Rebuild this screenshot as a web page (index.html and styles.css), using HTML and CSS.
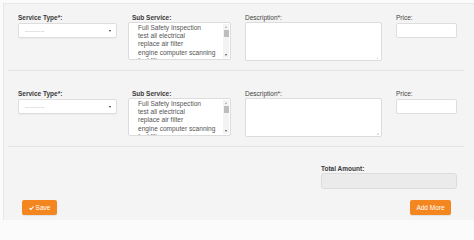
FILE: index.html
```html
<!DOCTYPE html>
<html>
<head>
<meta charset="utf-8">
<link rel="stylesheet" href="styles.css">
</head>
<body>
<div class="panel">
  <div class="item">
    <div class="field">
      <label class="lbl">Service Type*:</label>
      <div class="select"><span class="ph">---------</span><span class="caret"></span></div>
    </div>
    <div class="field">
      <label class="lbl lbl-sub">Sub Service:</label>
      <div class="listbox">
        <div class="options">
          <div>Full Safety Inspection</div>
          <div>test all electrical</div>
          <div>replace air filter</div>
          <div>engine computer scanning</div>
          <div>fuel filter</div>
        </div>
        <div class="sbar"><span class="up"></span><span class="thumb"></span><span class="down"></span></div>
      </div>
    </div>
    <div class="field">
      <label class="lbl lbl-light">Description*:</label>
      <textarea class="textarea"></textarea>
    </div>
    <div class="field">
      <label class="lbl lbl-light">Price:</label>
      <div class="input"></div>
    </div>
  </div>
  <div class="item">
    <div class="field">
      <label class="lbl">Service Type*:</label>
      <div class="select"><span class="ph">---------</span><span class="caret"></span></div>
    </div>
    <div class="field">
      <label class="lbl lbl-sub">Sub Service:</label>
      <div class="listbox">
        <div class="options">
          <div>Full Safety Inspection</div>
          <div>test all electrical</div>
          <div>replace air filter</div>
          <div>engine computer scanning</div>
          <div>fuel filter</div>
        </div>
        <div class="sbar"><span class="up"></span><span class="thumb"></span><span class="down"></span></div>
      </div>
    </div>
    <div class="field">
      <label class="lbl lbl-light">Description*:</label>
      <textarea class="textarea"></textarea>
    </div>
    <div class="field">
      <label class="lbl lbl-light">Price:</label>
      <div class="input"></div>
    </div>
  </div>
  <div class="total-row">
    <div class="total">
      <label class="lbl">Total Amount:</label>
      <div class="input input-disabled"></div>
    </div>
  </div>
  <div class="actions">
    <button class="btn btn-save"><svg class="check" viewBox="0 0 10 8" width="5" height="4"><path d="M1 4 L4 7 L9 1" fill="none" stroke="#fff" stroke-width="2.2"/></svg>Save</button>
    <button class="btn btn-add">Add More</button>
  </div>
</div>
</body>
</html>
```
FILE: styles.css
```css
html, body {
  margin: 0;
  padding: 0;
  background: #fbfbfb;
  font-family: "Liberation Sans", Arial, sans-serif;
}
.panel {
  margin: 3px 0 0 3px;
  height: 217px;
  box-sizing: border-box;
  border-top: 1px solid #e9e9e9;
  border-left: 1px solid #e6e6e6;
  background: #f4f4f4;
  padding-left: 4px;
}
.item {
  width: 456px;
  box-sizing: border-box;
  display: grid;
  grid-template-columns: 110px 117px 151px 61px;
  align-items: start;
  padding: 19px 0 9px 10px;
  border-bottom: 1px solid #e4e4e4;
}
.item:first-child {
  padding-top: 10px;
}
.field {
  display: flex;
  flex-direction: column;
}
.lbl {
  display: block;
  height: 8px;
  font-size: 6.5px;
  line-height: 8px;
  font-weight: bold;
  color: #3a3a3a;
  white-space: nowrap;
}
.lbl-light {
  font-weight: normal;
  color: #444;
}
.lbl-sub {
  padding-left: 4px;
}
.select {
  width: 99px;
  height: 15px;
  margin-top: 1px;
  box-sizing: border-box;
  background: #fff;
  border: 1px solid #dedede;
  border-radius: 2px;
  box-shadow: 0 1px 1px rgba(0,0,0,0.04);
  display: flex;
  align-items: center;
  justify-content: space-between;
  padding: 0 5px 0 6px;
}
.ph {
  font-size: 6px;
  color: #aaa;
  letter-spacing: 0.2px;
}
.caret {
  width: 0;
  height: 0;
  border-left: 1.5px solid transparent;
  border-right: 1.5px solid transparent;
  border-top: 2.5px solid #333;
}
.listbox {
  width: 103px;
  height: 38px;
  box-sizing: border-box;
  background: #fff;
  border: 1px solid #dcdcdc;
  border-radius: 2px;
  display: flex;
  overflow: hidden;
}
.options {
  flex: 1;
  padding: 1px 0 0 9px;
  font-size: 6.6px;
  line-height: 8.2px;
  color: #555;
  white-space: nowrap;
  overflow: hidden;
}
.sbar {
  width: 6px;
  margin: 1px 1px 1px 0;
  display: flex;
  flex-direction: column;
  align-items: center;
  background: #f3f3f3;
}
.up {
  margin-top: 2px;
  width: 0;
  height: 0;
  border-left: 1.5px solid transparent;
  border-right: 1.5px solid transparent;
  border-bottom: 2px solid #aaa;
}
.thumb {
  margin-top: 2px;
  width: 5px;
  height: 7px;
  background: #bdbdbd;
}
.down {
  margin-top: auto;
  margin-bottom: 2px;
  width: 0;
  height: 0;
  border-left: 1.5px solid transparent;
  border-right: 1.5px solid transparent;
  border-top: 2px solid #555;
}
.textarea {
  width: 137px;
  height: 39px;
  box-sizing: border-box;
  margin: 0;
  padding: 0;
  background: #fff;
  border: 1px solid #dcdcdc;
  border-radius: 2px;
  font-size: 7px;
  resize: none;
  background-image: linear-gradient(135deg, transparent 0 70%, #c8c8c8 70% 76%, transparent 76% 84%, #c8c8c8 84% 90%, transparent 90%);
  background-size: 5px 5px;
  background-position: right 1px bottom 1px;
  background-repeat: no-repeat;
}
.input {
  width: 61px;
  height: 15px;
  margin-top: 1px;
  box-sizing: border-box;
  background: #fff;
  border: 1px solid #dedede;
  border-radius: 2px;
}
.total-row {
  width: 449px;
  box-sizing: border-box;
  padding: 18px 0 0 10px;
  display: flex;
  justify-content: flex-end;
}
.total {
  display: flex;
  flex-direction: column;
}
.input-disabled {
  width: 136px;
  height: 16px;
  margin-top: 0;
  background: #ebebeb;
  border-color: #dcdcdc;
  border-radius: 3px;
}
.actions {
  width: 443px;
  box-sizing: border-box;
  padding-left: 14px;
  margin-top: 11px;
  display: flex;
  justify-content: space-between;
}
.btn {
  height: 15px;
  border: none;
  border-radius: 2px;
  background: #f4861f;
  color: #fff;
  font-family: "Liberation Sans", Arial, sans-serif;
  font-size: 6.5px;
  padding: 0;
  display: flex;
  align-items: center;
  justify-content: center;
  box-shadow: 0 1px 1px rgba(0,0,0,0.08);
}
.btn-save {
  width: 35px;
}
.check {
  margin-right: 2px;
}
.btn-add {
  width: 41px;
}
```
